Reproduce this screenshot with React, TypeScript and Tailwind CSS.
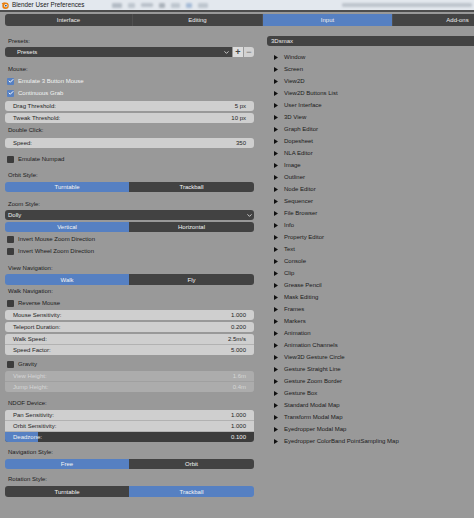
import { Check, ChevronDown } from 'lucide-react'

const KEYMAPS = [
  'Window', 'Screen', 'View2D', 'View2D Buttons List', 'User Interface', '3D View',
  'Graph Editor', 'Dopesheet', 'NLA Editor', 'Image', 'Outliner', 'Node Editor',
  'Sequencer', 'File Browser', 'Info', 'Property Editor', 'Text', 'Console', 'Clip',
  'Grease Pencil', 'Mask Editing', 'Frames', 'Markers', 'Animation', 'Animation Channels',
  'View3D Gesture Circle', 'Gesture Straight Line', 'Gesture Zoom Border', 'Gesture Box',
  'Standard Modal Map', 'Transform Modal Map', 'Eyedropper Modal Map',
  'Eyedropper ColorBand PointSampling Map',
]

const TABS = [
  { label: 'Interface', w: 'w-[128px]', active: false },
  { label: 'Editing', w: 'w-[130px]', active: false },
  { label: 'Input', w: 'w-[130px]', active: true },
  { label: 'Add-ons', w: 'w-[130px]', active: false },
]

function Label({ text, className = '' }: { text: string; className?: string }) {
  return (
    <div className={`flex h-[12px] items-center pl-[3px] text-[#1c1c1c] ${className}`}>{text}</div>
  )
}

function CheckRow({ text, checked = false, className = '' }: { text: string; checked?: boolean; className?: string }) {
  return (
    <div className={`flex h-[12px] items-center pl-[2px] ${className}`}>
      {checked ? (
        <span className="flex h-[7px] w-[7px] items-center justify-center rounded-[1px] bg-[#5680c2]">
          <Check size={6} strokeWidth={4} color="#fff" />
        </span>
      ) : (
        <span className="h-[7px] w-[7px] rounded-[1px] bg-[#3c3c3c]" />
      )}
      <span className={`ml-[4px] ${checked ? 'text-[#f2f2f2]' : 'text-[#1c1c1c]'}`}>{text}</span>
    </div>
  )
}

type Row = { label: string; value: string }

function Sliders({ rows, disabled = false, className = '' }: { rows: Row[]; disabled?: boolean; className?: string }) {
  return (
    <div className={`flex flex-col gap-px overflow-hidden rounded-[3px] ${disabled ? 'bg-[#a0a0a0]' : 'bg-[#b2b2b2]'} ${className}`}>
      {rows.map((r) => (
        <div
          key={r.label}
          className={`flex h-[10px] items-center justify-between pl-[8px] pr-[8px] ${
            disabled ? 'bg-[#acacac] text-[#d6d6d6]' : 'bg-[#cfcfcf] text-[#1e1e1e]'
          }`}
        >
          <span>{r.label}</span>
          <span>{r.value}</span>
        </div>
      ))}
    </div>
  )
}

function Segmented({ left, right, selected, className = '' }: { left: string; right: string; selected: 0 | 1; className?: string }) {
  return (
    <div className={`flex h-[10px] overflow-hidden rounded-[3px] text-[#f4f4f4] ${className}`}>
      <div className={`flex w-[124px] items-center justify-center ${selected === 0 ? 'bg-[#5680c2]' : 'bg-[#424242]'}`}>{left}</div>
      <div className={`flex flex-1 items-center justify-center ${selected === 1 ? 'bg-[#5680c2]' : 'bg-[#424242]'}`}>{right}</div>
    </div>
  )
}

function Triangle() {
  return (
    <svg width="4" height="5" viewBox="0 0 4 5" className="shrink-0">
      <polygon points="0,0 4,2.5 0,5" fill="#111" />
    </svg>
  )
}

function TitleBar() {
  return (
    <div className="relative flex h-[10px] items-center bg-[#e3e8ee] text-[6.3px] text-[#1a1a1a]">
      <svg width="9" height="9" viewBox="0 0 10 10" className="ml-[1px] shrink-0">
        <circle cx="5" cy="5.4" r="3.6" fill="#e87d0d" />
        <circle cx="5.4" cy="5.2" r="1.8" fill="#fff" />
        <circle cx="5.4" cy="5.2" r="1" fill="#265787" />
        <path d="M1 3 L4 2" stroke="#e87d0d" strokeWidth="1.2" />
      </svg>
      <span className="ml-[2px]">Blender User Preferences</span>
      <div className="ml-[28px] flex items-center gap-[6px] opacity-40 blur-[1px]">
        <span className="h-[5px] w-[10px] rounded-[1px] bg-[#6d7a88]" />
        <span className="h-[5px] w-[7px] rounded-[1px] bg-[#8894a0]" />
        <span className="h-[4px] w-[12px] rounded-[1px] bg-[#7b8794]" />
        <span className="h-[5px] w-[6px] rounded-[1px] bg-[#56616d]" />
        <span className="h-[5px] w-[9px] rounded-[1px] bg-[#8894a0]" />
        <span className="h-[5px] w-[6px] rounded-[1px] bg-[#4d7bb5]" />
        <span className="h-[5px] w-[10px] rounded-[1px] bg-[#8894a0]" />
      </div>
      <div className="ml-auto mr-[2px] h-[4px] w-[130px] rounded-[1px] bg-[#9aa3ad] opacity-50 blur-[1px]" />
    </div>
  )
}

export default function App() {
  return (
    <div className="h-[518px] w-[474px] overflow-hidden bg-[#999999] font-['Liberation_Sans',Arial,sans-serif] text-[6px] leading-none">
      <TitleBar />
      <div className="h-[2px] bg-[#4d4d4d]" />

      <div className="ml-[5px] mt-[2px] flex h-[12px] w-[600px] overflow-hidden rounded-l-[3px] text-[#eeeeee]">
        {TABS.map((t) => (
          <div
            key={t.label}
            className={`flex ${t.w} items-center justify-center border-r border-[#505050] ${t.active ? 'bg-[#5680c2]' : 'bg-[#444444]'}`}
          >
            {t.label}
          </div>
        ))}
      </div>

      <div className="flex">
        <div className="ml-[5px] flex w-[249px] flex-col">
          <Label text="Presets:" className="mt-[9px]" />
          <div className="flex h-[10px]">
            <div className="flex flex-1 items-center justify-between rounded-l-[3px] bg-[#424242] pl-[12px] pr-[2px] text-[#efefef]">
              <span>Presets</span>
              <ChevronDown size={7} strokeWidth={3} color="#dcdcdc" />
            </div>
            <div className="ml-px flex w-[10px] items-center justify-center bg-[#dcdcdc] text-[9px] font-bold text-[#444]">+</div>
            <div className="ml-px flex w-[10px] items-center justify-center rounded-r-[3px] bg-[#d2d2d2] text-[9px] font-bold text-[#8a8a8a]">−</div>
          </div>

          <Label text="Mouse:" className="mt-[6px]" />
          <CheckRow text="Emulate 3 Button Mouse" checked className="h-[11px]" />
          <CheckRow text="Continuous Grab" checked className="h-[11px]" />
          <Sliders rows={[{ label: 'Drag Threshold:', value: '5 px' }]} className="mt-[2px]" />
          <Sliders rows={[{ label: 'Tweak Threshold:', value: '10 px' }]} className="mt-[2px]" />
          <Label text="Double Click:" className="mt-[1px]" />
          <Sliders rows={[{ label: 'Speed:', value: '350' }]} className="mt-[2px]" />
          <CheckRow text="Emulate Numpad" className="mt-[5px]" />

          <Label text="Orbit Style:" className="mt-[4px]" />
          <Segmented left="Turntable" right="Trackball" selected={0} className="mt-[1px]" />
          <Label text="Zoom Style:" className="mt-[6px]" />
          <div className="flex h-[10px] items-center justify-between rounded-[3px] bg-[#424242] pl-[3px] pr-[1px] text-[#efefef]">
            <span>Dolly</span>
            <ChevronDown size={7} strokeWidth={3} color="#dcdcdc" />
          </div>
          <Segmented left="Vertical" right="Horizontal" selected={0} className="mt-[2px]" />
          <CheckRow text="Invert Mouse Zoom Direction" className="mt-[1px]" />
          <CheckRow text="Invert Wheel Zoom Direction" />

          <Label text="View Navigation:" className="mt-[5px]" />
          <Segmented left="Walk" right="Fly" selected={0} className="h-[11px]" />
          <Label text="Walk Navigation:" />
          <CheckRow text="Reverse Mouse" />
          <Sliders rows={[{ label: 'Mouse Sensitivity:', value: '1.000' }]} className="mt-[1px]" />
          <Sliders rows={[{ label: 'Teleport Duration:', value: '0.200' }]} className="mt-[2px]" />
          <Sliders
            rows={[
              { label: 'Walk Speed:', value: '2.5m/s' },
              { label: 'Speed Factor:', value: '5.000' },
            ]}
            className="mt-[2px]"
          />
          <CheckRow text="Gravity" className="mt-[3px]" />
          <Sliders
            disabled
            rows={[
              { label: 'View Height:', value: '1.6m' },
              { label: 'Jump Height:', value: '0.4m' },
            ]}
            className="mt-[1px]"
          />

          <Label text="NDOF Device:" className="mt-[5px]" />
          <div className="mt-[1px] flex flex-col gap-px overflow-hidden rounded-[3px] bg-[#b2b2b2]">
            <div className="flex h-[10px] items-center justify-between bg-[#cfcfcf] px-[8px] text-[#1e1e1e]">
              <span>Pan Sensitivity:</span>
              <span>1.000</span>
            </div>
            <div className="flex h-[10px] items-center justify-between bg-[#cfcfcf] px-[8px] text-[#1e1e1e]">
              <span>Orbit Sensitivity:</span>
              <span>1.000</span>
            </div>
            <div className="flex h-[10px] bg-[#3c3c3c] text-[#f0f0f0]">
              <div className="flex w-[33px] shrink-0 items-center bg-[#5680c2] pl-[8px]">
                <span className="whitespace-nowrap">Deadzone:</span>
              </div>
              <div className="flex flex-1 items-center justify-end pr-[8px]">0.100</div>
            </div>
          </div>

          <Label text="Navigation Style:" className="mt-[4px]" />
          <Segmented left="Free" right="Orbit" selected={0} className="mt-[1px]" />
          <Label text="Rotation Style:" className="mt-[4px]" />
          <Segmented left="Turntable" right="Trackball" selected={1} className="mt-[1px] h-[11px]" />
        </div>

        <div className="ml-[13px] flex flex-1 flex-col">
          <div className="mt-[10px] flex h-[10px] items-center rounded-l-[3px] bg-[#434343] pl-[4px] text-[#ececec]">3Dsmax</div>
          <div className="mt-[5px] flex flex-col">
            {KEYMAPS.map((k) => (
              <div key={k} className="flex h-[12px] items-center pl-[7px] text-[#1a1a1a]">
                <Triangle />
                <span className="ml-[6px] whitespace-nowrap">{k}</span>
              </div>
            ))}
          </div>
        </div>
      </div>
    </div>
  )
}
